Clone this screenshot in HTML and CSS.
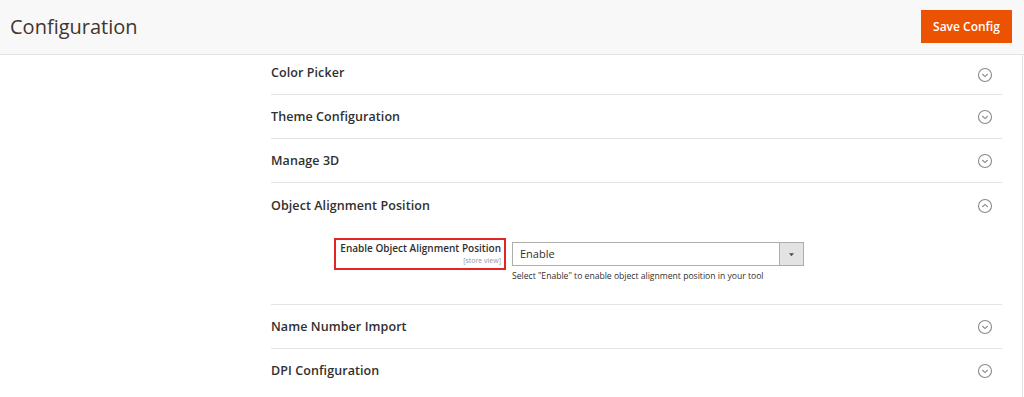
FILE: index.html
```html
<!DOCTYPE html>
<html lang="en">
<head>
<meta charset="utf-8">
<title>Configuration</title>
<link rel="stylesheet" href="styles.css">
</head>
<body>
<header class="page-header">
  <h1 class="page-title">Configuration</h1>
  <button class="btn-save">Save Config</button>
</header>
<main class="page-main">
  <div class="sections">
    <div class="section">
      <div class="section-head first">
        <span class="section-title">Color Picker</span>
        <svg class="toggle" viewBox="0 0 16 16"><circle cx="8" cy="8" r="6.5"/><path d="M5.3 7 L8 9.6 L10.7 7"/></svg>
      </div>
    </div>
    <div class="section">
      <div class="section-head">
        <span class="section-title">Theme Configuration</span>
        <svg class="toggle" viewBox="0 0 16 16"><circle cx="8" cy="8" r="6.5"/><path d="M5.3 7 L8 9.6 L10.7 7"/></svg>
      </div>
    </div>
    <div class="section">
      <div class="section-head">
        <span class="section-title">Manage 3D</span>
        <svg class="toggle" viewBox="0 0 16 16"><circle cx="8" cy="8" r="6.5"/><path d="M5.3 7 L8 9.6 L10.7 7"/></svg>
      </div>
    </div>
    <div class="section open">
      <div class="section-head">
        <span class="section-title">Object Alignment Position</span>
        <svg class="toggle" viewBox="0 0 16 16"><circle cx="8" cy="8" r="6.5"/><path d="M5.3 9 L8 6.4 L10.7 9"/></svg>
      </div>
      <div class="fieldset">
        <div class="field-label">
          <span class="label-text">Enable Object Alignment Position</span>
          <span class="scope">[store view]</span>
        </div>
        <div class="field-control">
          <div class="select">
            <span class="select-value">Enable</span>
            <span class="select-arrow"><svg viewBox="0 0 8 6"><path d="M1 1.5 L7 1.5 L4 5 Z"/></svg></span>
          </div>
          <p class="note">Select "Enable" to enable object alignment position in your tool</p>
        </div>
      </div>
    </div>
    <div class="section">
      <div class="section-head">
        <span class="section-title">Name Number Import</span>
        <svg class="toggle" viewBox="0 0 16 16"><circle cx="8" cy="8" r="6.5"/><path d="M5.3 7 L8 9.6 L10.7 7"/></svg>
      </div>
    </div>
    <div class="section">
      <div class="section-head">
        <span class="section-title">DPI Configuration</span>
        <svg class="toggle" viewBox="0 0 16 16"><circle cx="8" cy="8" r="6.5"/><path d="M5.3 7 L8 9.6 L10.7 7"/></svg>
      </div>
    </div>
  </div>
</main>
</body>
</html>
```

FILE: styles.css
```css
* { box-sizing: border-box; }
html, body { margin: 0; padding: 0; }
body {
  font-family: "Open Sans", "Liberation Sans", sans-serif;
  color: #303030;
  background: #fff;
  width: 1024px;
  height: 397px;
  overflow: hidden;
}
.page-header {
  height: 55px;
  background: #f8f8f8;
  border-bottom: 1px solid #e3e3e3;
  display: flex;
  align-items: flex-start;
  justify-content: space-between;
  padding: 10px 12px 0 10px;
}
.page-title {
  margin: 0;
  font-size: 20px;
  font-weight: 400;
  color: #41362f;
  line-height: 34px;
}
.btn-save {
  width: 91px;
  height: 33px;
  background: #eb5202;
  border: 1px solid #eb5202;
  color: #fff;
  font-family: "Open Sans", "Liberation Sans", sans-serif;
  font-size: 12px;
  font-weight: 600;
  padding: 0;
  margin: 0;
}
.page-main {
  display: flex;
  height: 342px;
  border-right: 1px solid #e3e3e3;
  margin-right: 1px;
}
.sections {
  margin-left: 271px;
  width: 731px;
}
.section {
  border-bottom: 1px solid #e3e3e3;
}
.section:last-child { border-bottom: none; }
.section-head {
  height: 43px;
  display: flex;
  align-items: center;
  justify-content: space-between;
}
.section-head.first { height: 39px; align-items: flex-start; padding-top: 9px; }
.section-head.first .toggle { margin-top: 3px; }
.section-title {
  font-size: 12.5px;
  font-weight: 600;
  color: #303030;
  letter-spacing: 0.08px;
}
.toggle {
  width: 16px;
  height: 16px;
  margin-right: 9px;
  fill: none;
  stroke: #8a8a8a;
  stroke-width: 1.1;
}
.open .section-head { height: 45px; }
.fieldset {
  display: flex;
  align-items: flex-start;
  padding: 10px 0 22px 63px;
}
.field-label {
  width: 172px;
  height: 32px;
  border: 2px solid #e22626;
  display: flex;
  flex-direction: column;
  align-items: flex-end;
  padding: 1px 3px 0 3px;
  margin-right: 6px;
}
.label-text {
  font-size: 10px;
  font-weight: 600;
  line-height: 15px;
  color: #303030;
  white-space: nowrap;
}
.scope {
  font-size: 7px;
  line-height: 9px;
  color: #999;
  white-space: nowrap;
}
.field-control {
  width: 292px;
  padding-top: 4px;
}
.select {
  height: 24px;
  border: 1px solid #adadad;
  display: flex;
  align-items: stretch;
  background: #fff;
}
.select-value {
  flex: 1;
  font-size: 11px;
  line-height: 22px;
  padding-left: 7px;
  color: #303030;
}
.select-arrow {
  width: 24px;
  background: #e3e3e3;
  border-left: 1px solid #adadad;
  display: flex;
  align-items: center;
  justify-content: center;
}
.select-arrow svg {
  width: 7px;
  height: 5px;
  fill: #514943;
}
.note {
  margin: 4px 0 0 0;
  font-size: 8.6px;
  line-height: 12px;
  color: #303030;
  white-space: nowrap;
}
```
